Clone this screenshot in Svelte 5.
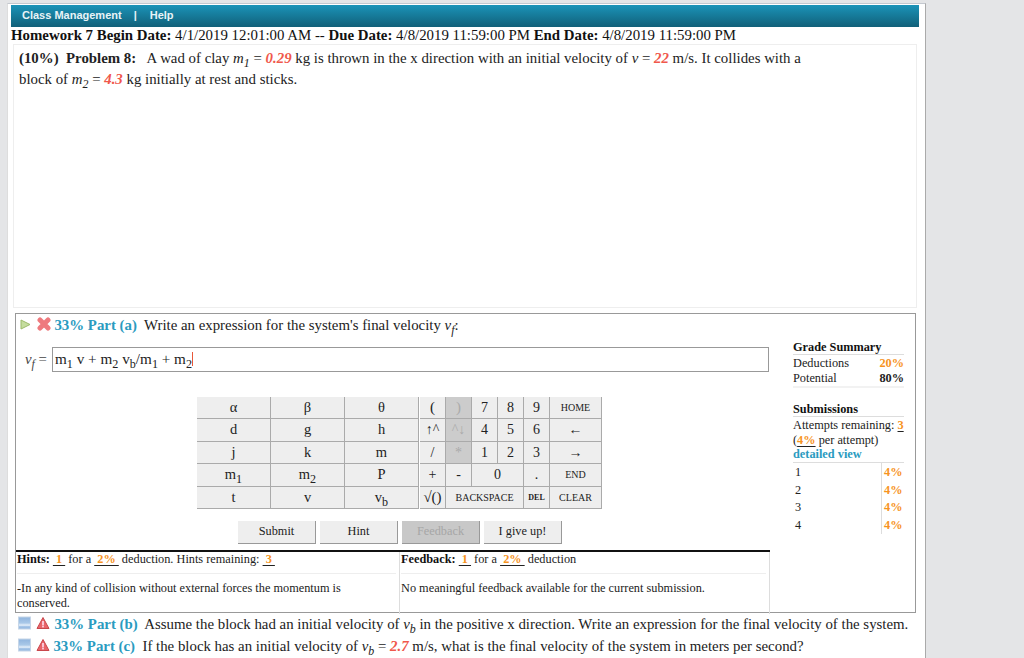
<script>
	const letters = [['α','β','θ'],['d','g','h'],['j','k','m'],['m<sub>1</sub>','m<sub>2</sub>','P'],['t','v','v<sub>b</sub>']];
	const keys = [
		{ t: '(' , c: 'big' }, { t: ')', c: 'big off' }, { t: '7' }, { t: '8' }, { t: '9' }, { t: 'HOME', c: 'small' },
		{ t: '↑^' }, { t: '^↓', c: 'off' }, { t: '4' }, { t: '5' }, { t: '6' }, { t: '←' },
		{ t: '/' }, { t: '*', c: 'off' }, { t: '1' }, { t: '2' }, { t: '3' }, { t: '→' },
		{ t: '+' }, { t: '-' }, { t: '0', c: 'two' }, { t: '.' }, { t: 'END', c: 'small' },
		{ t: '√()', c: 'big' }, { t: 'BACKSPACE', c: 'three small' }, { t: 'DEL', c: 'tiny' }, { t: 'CLEAR', c: 'small' }
	];
	const buttons = ['Submit', 'Hint', 'Feedback', 'I give up!'];
	const subs = [1, 2, 3, 4];
</script>

<div class="page">
	<div class="topbar"><b>Class Management</b><i>|</i><b>Help</b></div>
	<div class="title">
		<b>Homework 7 Begin Date:</b> 4/1/2019 12:01:00 AM -- <b>Due Date:</b> 4/8/2019 11:59:00 PM <b>End Date:</b> 4/8/2019 11:59:00 PM
	</div>
	<div class="problem">
		<p><b>(10%)&nbsp; Problem 8:</b> &nbsp; A wad of clay <em>m<sub>1</sub></em> = <strong>0.29</strong> kg is thrown in the x direction with an initial velocity of <em>v</em> = <strong>22</strong> m/s. It collides with a block of <em>m<sub>2</sub></em> = <strong>4.3</strong> kg initially at rest and sticks.</p>
	</div>

	<div class="part">
		<div class="main">
			<div class="partline first">
				<svg width="13" height="13" viewBox="0 0 13 13"><path d="M2 2 L11 6.5 L2 11 Z" fill="#c5dd9e" stroke="#9dba6c"/></svg>
				<svg class="x" width="14" height="14" viewBox="0 0 14 14"><path d="M3 3 L11 11 M11 3 L3 11" stroke="#ee7a7e" stroke-width="5" stroke-linecap="round"/></svg>
				<span class="pct">33% Part (a)</span>&nbsp; Write an expression for the system's final velocity <em>v<sub>f</sub></em>:
			</div>
			<div class="answer">
				<span class="lhs"><em>v<sub>f</sub></em> =</span>
				<div class="input">m<sub>1</sub> v + m<sub>2</sub> v<sub>b</sub>/m<sub>1</sub> + m<sub>2</sub><span class="caret"></span></div>
			</div>
			<div class="keypad">
				<div class="letters">
					{#each letters as row}
						{#each row as l}
							<div class="key lg">{@html l}</div>
						{/each}
					{/each}
				</div>
				<div class="nums">
					{#each keys as k}
						<div class="key {k.c ?? ''}">{k.t}</div>
					{/each}
				</div>
			</div>
			<div class="buttons">
				{#each buttons as b}
					<div class="btn" class:dis={b === 'Feedback'}>{b}</div>
				{/each}
			</div>
			<div class="hints">
				<div class="hcol left">
					<div class="hhead"><b>Hints:</b> <u>&nbsp;1&nbsp;</u> for a <u>&nbsp;2%&nbsp;</u> deduction. Hints remaining: <u>&nbsp;3&nbsp;</u></div>
					<div class="hbody">-In any kind of collision without external forces the momentum is conserved.</div>
				</div>
				<div class="hcol">
					<div class="hhead"><b>Feedback:</b> <u>&nbsp;1&nbsp;</u> for a <u>&nbsp;2%&nbsp;</u> deduction</div>
					<div class="hbody">No meaningful feedback available for the current submission.</div>
				</div>
			</div>
		</div>
		<div class="side">
			<div class="shead">Grade Summary</div>
			<div class="srow grade"><span>Deductions</span><span class="or">20%</span></div>
			<div class="srow grade last"><span>Potential</span><b>80%</b></div>
			<div class="shead sub">Submissions</div>
			<div class="attempts">Attempts remaining: <u class="or">3</u><br>(<u class="or">4%</u> per attempt)<br><a>detailed view</a></div>
			<div class="subs">
				{#each subs as s}
					<div class="subrow"><span>{s}</span><b class="or">4%</b></div>
				{/each}
			</div>
		</div>
	</div>

	<div class="partline">
		<svg width="14" height="14" viewBox="0 0 14 14"><defs><linearGradient id="mn" x1="0" y1="0" x2="0" y2="1"><stop offset="0" stop-color="#8fb4de"/><stop offset="0.5" stop-color="#a9c8e8"/><stop offset="0.68" stop-color="#e6f0fa"/><stop offset="0.8" stop-color="#a2c2e6"/><stop offset="1" stop-color="#8fb4de"/></linearGradient></defs><rect x="0.5" y="1" width="12" height="12" fill="url(#mn)" stroke="#c6d6e8"/></svg>
		<svg class="tri" width="14" height="14" viewBox="0 0 14 14"><path d="M7 1.5 L13 12.5 H1 Z" fill="#e8656a" stroke="#c9474c" stroke-linejoin="round"/><rect x="6.2" y="5" width="1.6" height="4.5" fill="#fde"/><rect x="6.2" y="10" width="1.6" height="1.4" fill="#fde"/></svg>
		<span class="pct">33% Part (b)</span>&nbsp; Assume the block had an initial velocity of <em>v<sub>b</sub></em> in the positive x direction. Write an expression for the final velocity of the system.
	</div>
	<div class="partline">
		<svg width="14" height="14" viewBox="0 0 14 14"><rect x="0.5" y="1" width="12" height="12" fill="url(#mn)" stroke="#c6d6e8"/></svg>
		<svg class="tri" width="14" height="14" viewBox="0 0 14 14"><path d="M7 1.5 L13 12.5 H1 Z" fill="#e8656a" stroke="#c9474c" stroke-linejoin="round"/><rect x="6.2" y="5" width="1.6" height="4.5" fill="#fde"/><rect x="6.2" y="10" width="1.6" height="1.4" fill="#fde"/></svg>
		<span class="pct">33% Part (c)</span>&nbsp; If the block has an initial velocity of <em>v<sub>b</sub></em> = <strong>2.7</strong> m/s, what is the final velocity of the system in meters per second?
	</div>
</div>

<style>
	:global(body) {
		margin: 0;
		background: #e4e5e7;
		font-family: "Liberation Serif", serif;
		color: #222;
		height: 658px;
		overflow: hidden;
	}
	.page {
		box-sizing: border-box;
		width: 919px;
		height: 655px;
		margin: 3px 0 0 7px;
		padding: 1px 0 0 3px;
		background: #fff;
		border-left: 1px solid #ddd;
		border-top: 1px solid #c4c8cf;
		border-right: 1px solid #aaa;
		overflow: hidden;
	}
	.topbar {
		width: 908px;
		height: 22px;
		box-sizing: border-box;
		padding-left: 11px;
		background: linear-gradient(#1b93b8, #116079);
		color: #e8f3f7;
		font: bold 11px/20px "Liberation Sans", sans-serif;
		display: flex;
	}
	.topbar i {
		font-style: normal;
		margin: 0 13px 0 12px;
	}
	.title {
		font-size: 14.85px;
		line-height: 16px;
		height: 17px;
		white-space: nowrap;
		color: #111;
	}
	.problem {
		box-sizing: border-box;
		width: 904px;
		height: 264px;
		margin-left: 2px;
		padding: 3px 5px;
		border: 1px solid #eee;
	}
	.problem p {
		margin: 0;
		width: 800px;
		font-size: 14.85px;
		line-height: 21px;
	}
	em { font-style: italic; }
	strong {
		color: #f0584c;
		font-style: italic;
	}
	sub {
		font-size: 80%;
		line-height: 0;
	}
	.part {
		box-sizing: border-box;
		width: 901px;
		height: 300px;
		margin: 5px 0 0 4px;
		border: 1px solid #999;
		display: flex;
	}
	.main { width: 755px; }
	.partline {
		font-size: 14.85px;
		line-height: 22px;
		height: 22px;
		white-space: nowrap;
		display: block;
	}
	.partline svg { vertical-align: -1px; }
	.partline .x { margin-left: 1px; }
	.partline .tri { margin-right: 1px; }
	.partline.first { padding-left: 3px; height: 24px; }
	.page > .partline { margin-left: 7px; }
	.page > .partline:last-child .pct { margin-left: -1px; }
	.pct {
		color: #2a9bbf;
		font-weight: bold;
	}
	.answer {
		display: flex;
		align-items: center;
		margin-top: 9px;
		padding-left: 9px;
	}
	.lhs {
		font-size: 14.85px;
		width: 27px;
		color: #444;
	}
	.input {
		box-sizing: border-box;
		width: 717px;
		height: 25px;
		border: 1px solid #999;
		padding-left: 2px;
		font-size: 15.2px;
		line-height: 22px;
		white-space: pre;
	}
	.caret {
		display: inline-block;
		width: 1px;
		height: 14px;
		background: #e8583a;
		vertical-align: -2px;
	}
	.keypad {
		display: flex;
		gap: 1px;
		margin: 25px 0 0 181px;
		width: 405px;
	}
	.letters, .nums {
		display: grid;
		grid-template-rows: repeat(5, 22.4px);
	}
	.letters { grid-template-columns: repeat(3, 74px); }
	.nums { grid-template-columns: repeat(5, 26px) 52px; }
	.key {
		box-sizing: border-box;
		background: #eee;
		border-right: 1px solid #aaa;
		border-bottom: 1px solid #aaa;
		text-align: center;
		font-size: 14px;
		line-height: 21px;
		color: #222;
	}
	.key.lg { font-size: 14.5px; }
	.key.big { font-size: 15px; }
	.key.two { grid-column: span 2; }
	.key.three { grid-column: span 3; }
	.key.small { font-size: 10px; }
	.key.tiny { font-size: 8px; font-weight: bold; }
	.key.off {
		background: #ccc;
		color: #aaa;
	}
	.buttons {
		display: flex;
		gap: 4px;
		margin: 12px 0 0 222px;
	}
	.btn {
		box-sizing: border-box;
		width: 78px;
		height: 23px;
		background: #eee;
		border-right: 1px solid #999;
		border-bottom: 1px solid #999;
		text-align: center;
		font-size: 12.3px;
		line-height: 21px;
	}
	.btn.dis {
		background: #c8c8c8;
		color: #a6a6a6;
	}
	.hints {
		display: flex;
		margin-top: 6px;
		border-top: 2px solid #111;
		width: 754px;
	}
	.hcol {
		flex: 1;
		box-sizing: border-box;
		height: 62px;
		padding-left: 1px;
		border-right: 1px solid #ddd;
		font-size: 12.3px;
	}
	.hcol.left { flex: 0 0 384px; }
	.hhead {
		height: 21px;
		line-height: 15px;
		border-bottom: 1px solid #eee;
		margin-right: 3px;
	}
	.hhead b { color: #111; }
	.hhead u, .or { color: #f7931e; font-weight: bold; text-decoration-color: #222; text-underline-offset: 2px; }
	.hbody {
		line-height: 15px;
		padding: 7px 20px 0 0;
	}
	.side {
		width: 111px;
		margin-left: 22px;
		padding-top: 26px;
		font-size: 12.3px;
	}
	.shead {
		font-weight: bold;
		line-height: 14px;
		border-bottom: 1px solid #ddd;
		color: #111;
		white-space: nowrap;
	}
	.shead.sub { margin-top: 14px; }
	.srow {
		display: flex;
		justify-content: space-between;
		line-height: 15px;
		padding-top: 1px;
		margin-bottom: -1px;
	}
	.grade.last { border-bottom: 2px solid #f2f2f2; margin-bottom: 0; }
	.attempts {
		line-height: 14.6px;
		border-bottom: 1px solid #ddd;
		padding-top: 1px;
		white-space: nowrap;
	}
	a {
		color: #2a9bbf;
		font-weight: bold;
	}
	.subrow {
		display: flex;
		height: 17.8px;
		line-height: 18px;
	}
	.subrow span { width: 88px; padding-left: 2px; box-sizing: border-box; }
	.subrow b {
		border-left: 1px solid #ddd;
		padding-left: 2px;
	}
</style>
